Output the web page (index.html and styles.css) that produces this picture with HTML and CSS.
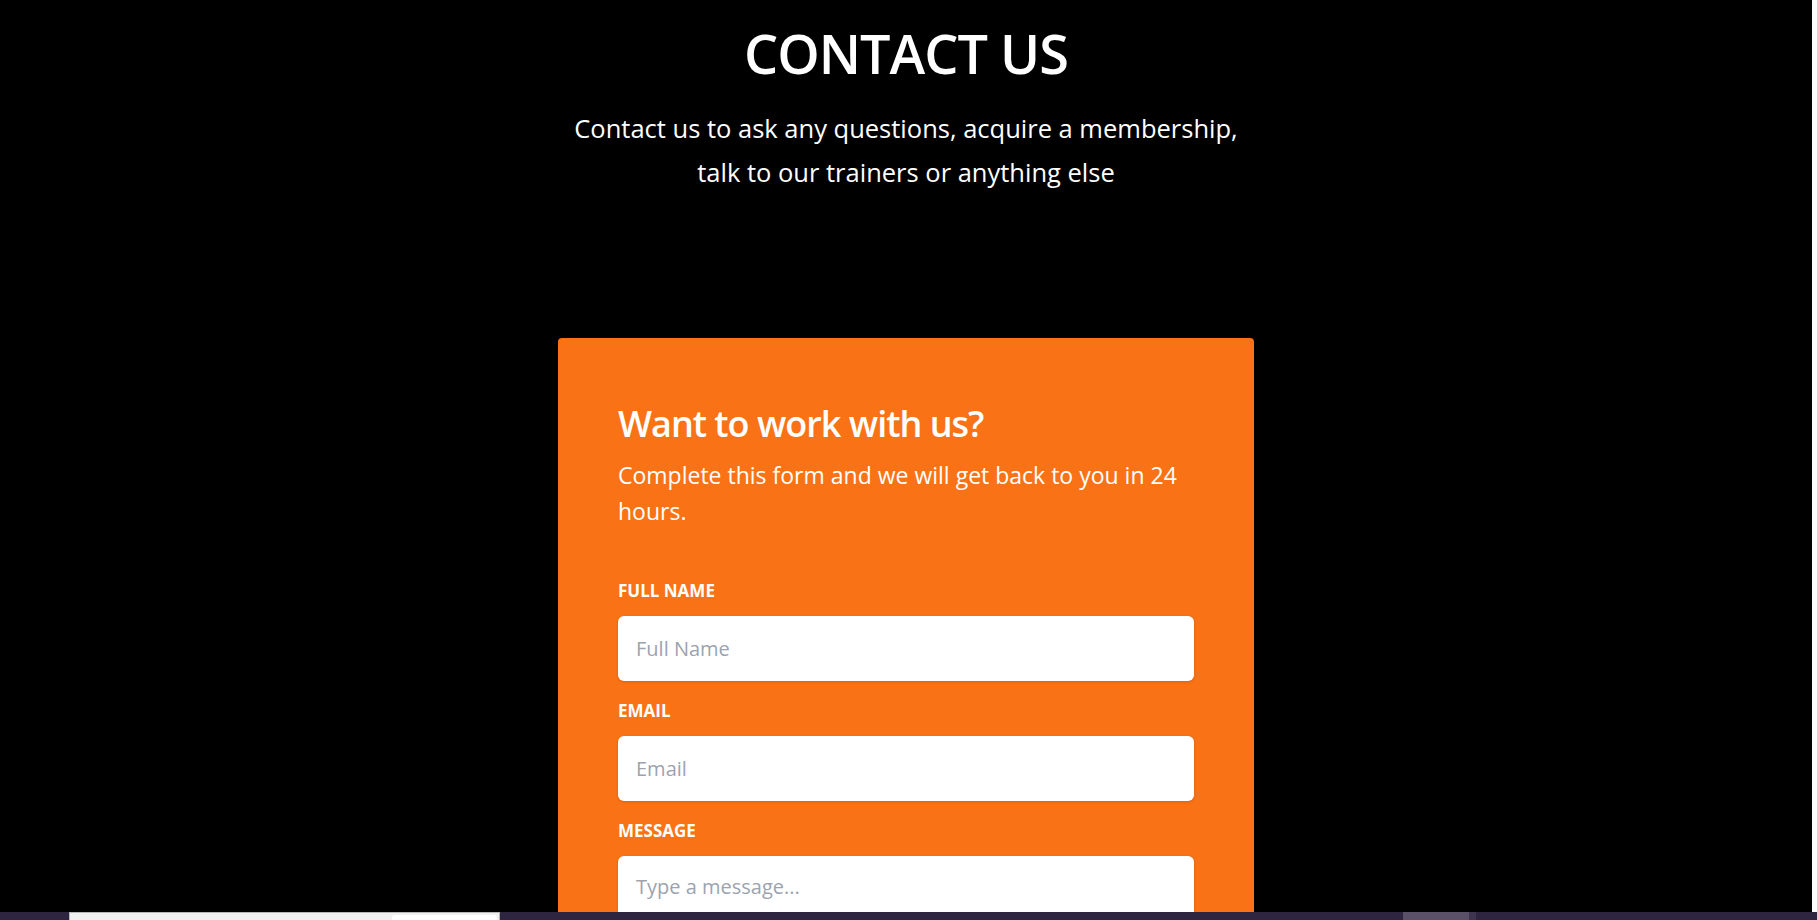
FILE: index.html
```html
<!DOCTYPE html>
<html lang="en">
<head>
<meta charset="utf-8">
<title>Contact Us</title>
<link rel="stylesheet" href="styles.css">
</head>
<body>
<div class="screen">
  <main class="page">
    <section class="intro">
      <h1 class="intro-title">CONTACT US</h1>
      <p class="intro-text">Contact us to ask any questions, acquire a membership, talk to our trainers or anything else</p>
    </section>
    <section class="card">
      <h2 class="card-title">Want to work with us?</h2>
      <p class="card-text">Complete this form and we will get back to you in 24 hours.</p>
      <form class="form">
        <div class="field">
          <label class="field-label" for="name">FULL NAME</label>
          <input class="field-input" id="name" type="text" placeholder="Full Name">
        </div>
        <div class="field">
          <label class="field-label" for="email">EMAIL</label>
          <input class="field-input" id="email" type="email" placeholder="Email">
        </div>
        <div class="field">
          <label class="field-label" for="msg">MESSAGE</label>
          <textarea class="field-input field-area" id="msg" placeholder="Type a message..."></textarea>
        </div>
      </form>
    </section>
  </main>
  <div class="scrollbar"></div>
</div>
<div class="taskbar">
  <div class="task-gap"></div>
  <div class="task-window"><div class="task-window-inner"></div></div>
  <div class="task-space"></div>
  <div class="task-active"></div>
  <div class="task-sep"></div>
  <div class="task-rest"></div>
</div>
</body>
</html>
```

FILE: styles.css
```css
* { box-sizing: border-box; }
html, body { margin: 0; padding: 0; }
body {
  width: 1817px;
  height: 920px;
  overflow: hidden;
  background: #000;
  font-family: "Open Sans", "Noto Sans", sans-serif;
  color: #fff;
}
.screen {
  display: flex;
  height: 912px;
}
.page {
  width: 1812px;
  height: 912px;
  overflow: hidden;
  background: #000;
  display: flex;
  flex-direction: column;
  align-items: center;
}
.scrollbar {
  width: 5px;
  background: #fcfcfc;
}
.intro {
  padding-top: 21px;
  text-align: center;
}
.intro-title {
  margin: 0;
  font-size: 54px;
  line-height: 65px;
  font-weight: 600;
  letter-spacing: -1px;
}
.intro-text {
  margin: 20px auto 0;
  max-width: 690px;
  font-size: 25.5px;
  line-height: 44px;
}
.card {
  margin-top: 144px;
  width: 696px;
  background: #f97316;
  border-radius: 4px;
  padding: 62px 60px 60px;
}
.card-title {
  margin: 0;
  font-size: 36px;
  line-height: 48px;
  font-weight: 600;
  letter-spacing: -1px;
}
.card-text {
  margin: 9px 0 0;
  font-size: 23px;
  line-height: 36px;
}
.form {
  margin-top: 50px;
  display: flex;
  flex-direction: column;
  gap: 18px;
}
.field {
  display: flex;
  flex-direction: column;
  gap: 13px;
}
.field-label {
  font-size: 17px;
  line-height: 24px;
  font-weight: 700;
}
.field-input {
  height: 65px;
  border: none;
  border-radius: 6px;
  background: #fff;
  padding: 0 18px;
  font-family: inherit;
  font-size: 20px;
  color: #111;
  box-shadow: 0 1px 3px rgba(0,0,0,0.15);
  outline: none;
}
.field-input::placeholder { color: #9ca3af; }
.field-area {
  height: 140px;
  padding-top: 17px;
  resize: none;
}
.taskbar {
  height: 8px;
  display: flex;
  background: #2e2640;
}
.task-gap { width: 69px; }
.task-window {
  width: 431px;
  background: #f0f0f0;
  border: 1px solid #b8b8b8;
  border-bottom: none;
  padding: 2px 2px 0 322px;
}
.task-window-inner {
  height: 100%;
  background: #fff;
  border-radius: 3px 3px 0 0;
}
.task-space { width: 903px; }
.task-active {
  width: 66px;
  background: #5a5068;
}
.task-sep {
  width: 7px;
  background: #3e3550;
}
.task-rest { flex: 1; }
```
